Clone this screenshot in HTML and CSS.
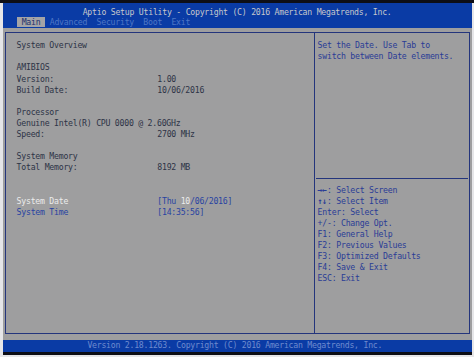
FILE: index.html
```html
<!DOCTYPE html>
<html>
<head>
<meta charset="utf-8">
<link rel="stylesheet" href="styles.css">
</head>
<body>
<div class="topbar"></div>
<div class="screen">
  <header class="head">
    <div class="title">Aptio Setup Utility - Copyright (C) 2016 American Megatrends, Inc.</div>
    <div class="tabs"><span class="tab on"> Main </span> <span class="tab">Advanced</span>  <span class="tab">Security</span>  <span class="tab">Boot</span>  <span class="tab">Exit</span></div>
  </header>
  <main class="body">
    <div class="frame">
      <section class="left">
        <div class="row">System Overview</div>
        <div class="row"></div>
        <div class="row">AMIBIOS</div>
        <div class="row"><span class="label">Version:</span><span>1.00</span></div>
        <div class="row"><span class="label">Build Date:</span><span>10/06/2016</span></div>
        <div class="row"></div>
        <div class="row">Processor</div>
        <div class="row">Genuine Intel(R) CPU 0000 @ 2.60GHz</div>
        <div class="row"><span class="label">Speed:</span><span>2700 MHz</span></div>
        <div class="row"></div>
        <div class="row">System Memory</div>
        <div class="row"><span class="label">Total Memory:</span><span>8192 MB</span></div>
        <div class="row"></div>
        <div class="row"></div>
        <div class="row item selected"><span class="label">System Date</span><span class="val">[Thu <span class="cur">10</span>/06/2016]</span></div>
        <div class="row item"><span class="label">System Time</span><span class="val">[14:35:56]</span></div>
      </section>
      <aside class="right">
        <div class="row">Set the Date. Use Tab to</div>
        <div class="row">switch between Date elements.</div>
        <div class="gap"></div>
        <div class="row sep"></div>
        <div class="row"><span class="arr">&#8594;&#8592;</span>: Select Screen</div>
        <div class="row"><span class="arr">&#8593;&#8595;</span>: Select Item</div>
        <div class="row">Enter: Select</div>
        <div class="row">+/-: Change Opt.</div>
        <div class="row">F1: General Help</div>
        <div class="row">F2: Previous Values</div>
        <div class="row">F3: Optimized Defaults</div>
        <div class="row">F4: Save &amp; Exit</div>
        <div class="row">ESC: Exit</div>
      </aside>
    </div>
  </main>
  <footer class="foot">Version 2.18.1263. Copyright (C) 2016 American Megatrends, Inc.</footer>
  <div class="foot-shadow"></div>
</div>
</body>
</html>
```
FILE: styles.css
```css
html, body {
  margin: 0;
  padding: 0;
}
body {
  width: 474px;
  height: 357px;
  overflow: hidden;
  background: #e6e6e8;
  font-family: "DejaVu Sans Mono", monospace;
  font-size: 8.2px;
  letter-spacing: -0.25px;
  line-height: 11.1px;
}
.topbar {
  height: 3px;
  background: #0d0e16;
}
.screen {
  margin-left: 3px;
  width: 469px;
}
.head {
  background: #0a3ba5;
  height: 25px;
}
.title {
  height: 14.3px;
  box-sizing: border-box;
  padding-top: 3.6px;
  padding-left: 79.7px;
  color: #c6c8cc;
  white-space: pre;
}
.tabs {
  height: 10.7px;
  padding-left: 14px;
  white-space: pre;
  color: #4f77c6;
  overflow: hidden;
}
.tab {
  display: inline-block;
  height: 10px;
  vertical-align: top;
  line-height: 11.1px;
}
.tab.on {
  background: #a4a4a6;
  color: #1e2f6c;
}
.body {
  background: #9e9e9f;
  height: 312px;
  box-sizing: border-box;
  padding: 4px 0 0 2px;
}
.frame {
  display: flex;
  width: 465px;
  height: 302px;
  box-sizing: border-box;
  border: 1px solid #24357c;
}
.left {
  width: 309px;
  box-sizing: border-box;
  border-right: 1px solid #24357c;
  padding: 7.3px 0 0 10.6px;
  color: #2d3346;
}
.right {
  flex: 1;
  box-sizing: border-box;
  padding-top: 7.3px;
  color: #2a3c96;
}
.right .row {
  padding-left: 2.6px;
}
.row {
  height: 11.1px;
  white-space: pre;
  display: flex;
}
.arr {
  font-weight: bold;
  letter-spacing: -0.6px;
  padding-right: 0.7px;
}
.label {
  width: 140.7px;
  flex: none;
}
.item {
  color: #2843a2;
}
.item.selected .label {
  color: #ececec;
}
.cur {
  color: #ececec;
}
.gap {
  height: 111px;
}
.right .row.sep {
  padding-left: 0;
  position: relative;
}
.sep::after {
  content: "";
  position: absolute;
  left: 1px;
  right: 1px;
  top: 5px;
  border-top: 1px solid #24357c;
}
.foot {
  background: #0a3ba5;
  height: 11.5px;
  box-sizing: border-box;
  padding-top: 0.3px;
  padding-left: 84.4px;
  color: #6e8bcf;
  white-space: pre;
}
.foot-shadow {
  height: 3px;
  background: #0d0e16;
}
```
